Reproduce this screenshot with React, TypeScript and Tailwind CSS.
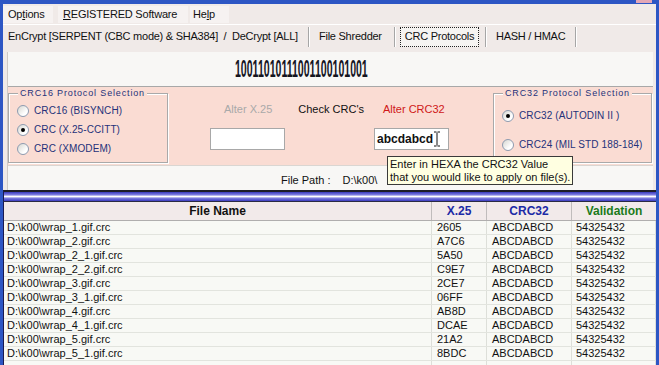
import React from "react";

const rows: [string, string][] = [
  ["D:\\k00\\wrap_1.gif.crc", "2605"],
  ["D:\\k00\\wrap_2.gif.crc", "A7C6"],
  ["D:\\k00\\wrap_2_1.gif.crc", "5A50"],
  ["D:\\k00\\wrap_2_2.gif.crc", "C9E7"],
  ["D:\\k00\\wrap_3.gif.crc", "2CE7"],
  ["D:\\k00\\wrap_3_1.gif.crc", "06FF"],
  ["D:\\k00\\wrap_4.gif.crc", "AB8D"],
  ["D:\\k00\\wrap_4_1.gif.crc", "DCAE"],
  ["D:\\k00\\wrap_5.gif.crc", "21A2"],
  ["D:\\k00\\wrap_5_1.gif.crc", "8BDC"],
  ["", ""],
];

function Radio({ checked }: { checked?: boolean }) {
  return (
    <span className="w-[12px] h-[12px] rounded-full border border-[#8d9bb0] bg-[linear-gradient(135deg,#d6d6d0,#ffffff_70%)] flex items-center justify-center shrink-0">
      {checked && <span className="w-[4px] h-[4px] rounded-full bg-black" />}
    </span>
  );
}

function Sep() {
  return <span className="block w-[2px] h-[20px] border-l border-[#a6a6a6] border-r border-r-white shrink-0" />;
}

function GroupBox({
  title,
  children,
  className,
}: {
  title: string;
  children: React.ReactNode;
  className: string;
}) {
  return (
    <div className={"relative border border-[#a9a9a9] shadow-[inset_1px_1px_0_#ffffff,1px_1px_0_#ffffff] " + className}>
      <span className="absolute -top-[7px] left-[9px] px-[2px] bg-[#fadcd3] text-[9px] leading-[12px] tracking-[0.85px] text-[#25327a] whitespace-nowrap">
        {title}
      </span>
      {children}
    </div>
  );
}

export default function App() {
  return (
    <div className="w-[659px] h-[365px] overflow-hidden flex flex-col bg-[#2d56c4] font-['Liberation_Sans',Arial,sans-serif] text-black">
      {/* title bar remnant */}
      <div className="h-[4px] shrink-0 flex justify-end pr-[7px]">
        <div className="w-[16px] h-[3px] bg-[#e3a7b6]" />
      </div>

      <div className="flex-1 mx-[3px] bg-[#f0eae8] flex flex-col min-h-0 relative">
        {/* menu bar */}
        <div className="h-[20px] shrink-0 flex items-end pb-[1px] text-[11px] tracking-[-0.2px] text-[#111]">
          <div className="w-[50px] h-[17px] pl-[5px] flex items-center bg-[#f6f2f1]">
            Op<span className="underline">t</span>ions
          </div>
          <div className="ml-[5px] w-[130px] h-[17px] pl-[5px] flex items-center bg-[#f6f2f1]">
            <span className="underline">R</span>EGISTERED Software
          </div>
          <div className="ml-[2px] w-[39px] h-[17px] pl-[3px] flex items-center bg-[#f6f2f1]">
            He<span className="underline">l</span>p
          </div>
        </div>
        <div className="h-[1px] shrink-0 bg-white" />

        {/* tabs */}
        <div className="h-[23px] shrink-0 flex items-center text-[11px] tracking-[-0.25px] text-[#111]">
          <span className="ml-[5px] w-[289px] whitespace-nowrap">EnCrypt [SERPENT (CBC mode) &amp; SHA384]&nbsp; /&nbsp; DeCrypt [ALL]</span>
          <span className="ml-[11px]"><Sep /></span>
          <span className="ml-[9px] w-[64px] whitespace-nowrap">File Shredder</span>
          <span className="ml-[11px]"><Sep /></span>
          <span className="ml-[4px] w-[79px] h-[20px] flex items-center justify-center border border-dotted border-[#222] bg-[#f6f4f2] whitespace-nowrap">
            CRC Protocols
          </span>
          <span className="ml-[6px]"><Sep /></span>
          <span className="ml-[9px] w-[68px] whitespace-nowrap">HASH / HMAC</span>
          <span className="ml-[11px]"><Sep /></span>
        </div>

        {/* CRC panel */}
        <div className="mt-[4px] ml-[4px] mr-[3px] h-[138px] shrink-0 flex flex-col border-l border-[#cfcac6] bg-[#f8f7f5]">
          <div className="h-[34px] shrink-0 flex items-center">
            <span className="ml-[227px] inline-block origin-left scale-x-[0.44] text-[24px] leading-[24px] font-bold text-[#15151f] whitespace-nowrap">
              10011010111001100101001
            </span>
          </div>
          <div className="h-[79px] shrink-0 flex border-t border-[#a8a8a8] bg-[#fadcd3]">
            <GroupBox title="CRC16 Protocol Selection" className="mt-[6px] w-[160px] h-[70px] shrink-0">
              <div className="flex flex-col pt-[11px] pl-[8px] gap-[7px] text-[10px] leading-[12px] tracking-[0.1px] text-[#25327a] whitespace-nowrap">
                <div className="flex items-center gap-[5px]"><Radio /><span>CRC16 (BISYNCH)</span></div>
                <div className="flex items-center gap-[5px]"><Radio checked /><span>CRC (X.25-CCITT)</span></div>
                <div className="flex items-center gap-[5px]"><Radio /><span>CRC (XMODEM)</span></div>
              </div>
            </GroupBox>

            <div className="w-[325px] shrink-0 flex flex-col">
              <div className="mt-[16px] h-[13px] flex items-center text-[11px] whitespace-nowrap">
                <span className="ml-[56px] text-[#a9a9a9]">Alter X.25</span>
                <span className="ml-[26px] text-[#111]">Check CRC's</span>
                <span className="ml-[19px] text-[#d01818]">Alter CRC32</span>
              </div>
              <div className="mt-[12px] flex">
                <div className="ml-[42px] w-[75px] h-[22px] border border-[#a8a8a8] bg-white" />
                <div className="ml-[89px] w-[75px] h-[22px] border border-[#a8a8a8] bg-white relative flex items-center">
                  <span className="pl-[2px] text-[12px] font-bold text-[#111]">abcdabcd</span>
                  <svg className="absolute left-[58px] top-[2px]" width="8" height="16" viewBox="0 0 8 16">
                    <path d="M1 1h2.5M4.5 1H7M4 1.5v13M1 15h2.5M4.5 15H7" stroke="#111" strokeWidth="1" fill="none" />
                  </svg>
                </div>
              </div>
            </div>

            <GroupBox title="CRC32 Protocol Selection" className="mt-[6px] w-[159px] h-[70px] shrink-0">
              <div className="flex flex-col pt-[16px] pl-[8px] gap-[17px] text-[10px] leading-[12px] tracking-[0.12px] text-[#25327a] whitespace-nowrap">
                <div className="flex items-center gap-[5px]"><Radio checked /><span>CRC32 (AUTODIN II )</span></div>
                <div className="flex items-center gap-[5px]"><Radio /><span>CRC24 (MIL STD 188-184)</span></div>
              </div>
            </GroupBox>
          </div>
          <div className="flex-1 flex items-end pb-[2px] text-[11px] text-[#111] whitespace-nowrap border-t border-[#dad6d2]">
            <span className="ml-[273px]">File Path :</span>
            <span className="ml-[12px]">D:\k00\</span>
          </div>
        </div>

        {/* splitter bar */}
        <div className="h-[12px] shrink-0 border-t-2 border-[#1e1e2a] border-b border-b-[#2a2a44] border-l border-l-[#1a1a50] bg-[linear-gradient(to_bottom,#3a3abf,#7c7ce0_30%,#ffffff_50%,#7c7ce0_70%,#3a3abf)]" />

        {/* table */}
        <div className="flex-1 min-h-0 flex flex-col border-l border-[#1a1a50] bg-[#f8f9f5]">
          <div className="h-[19px] shrink-0 flex border-b border-[#b0aeae] bg-[#f2eaea] text-[12px] font-bold">
            <div className="w-[428px] flex items-center justify-center border-r border-[#c0bcbc] text-[#111]">File Name</div>
            <div className="w-[55px] flex items-center justify-center border-r border-[#c0bcbc] text-[#1c2aa6]">X.25</div>
            <div className="w-[85px] flex items-center justify-center border-r border-[#c0bcbc] text-[#1c2aa6]">CRC32</div>
            <div className="w-[84px] flex items-center justify-center text-[#1b7a1b]">Validation</div>
          </div>
          {rows.map(([name, x25], i) => (
            <div key={i} className="h-[14px] shrink-0 flex border-b border-[#e2e4de] text-[11px] leading-[13px] text-[#111] whitespace-nowrap">
              <div className="w-[428px] pl-[3px] border-r border-[#dddfd9]">{name}</div>
              <div className="w-[55px] pl-[5px] border-r border-[#dddfd9]">{x25}</div>
              <div className="w-[85px] pl-[5px] border-r border-[#dddfd9]">{name ? "ABCDABCD" : ""}</div>
              <div className="w-[84px] pl-[4px] border-r border-[#dddfd9]">{name ? "54325432" : ""}</div>
            </div>
          ))}
        </div>

        {/* tooltip */}
        <div className="absolute left-[384px] top-[152px] w-[186px] h-[29px] border border-[#3a3a3a] bg-[#ffffe1] text-[11px] leading-[13px] text-[#111] pl-[2px] pt-[1px] whitespace-nowrap">
          <div>Enter in HEXA the CRC32 Value</div>
          <div>that you would like to apply on file(s).</div>
        </div>
      </div>
    </div>
  );
}
